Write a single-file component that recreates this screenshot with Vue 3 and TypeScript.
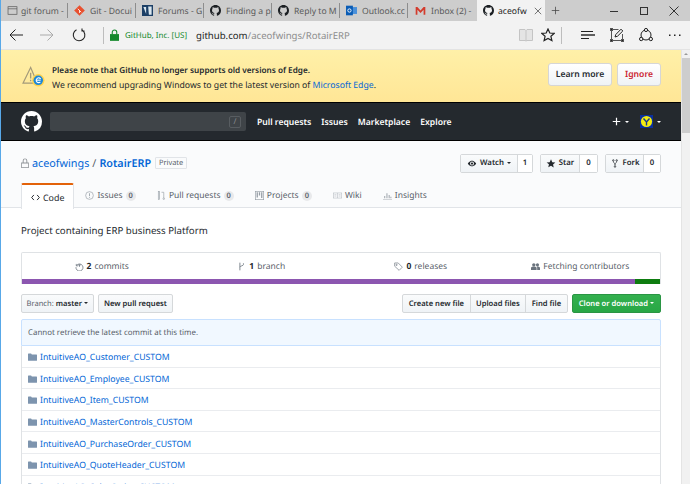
<script setup lang="ts">
interface Tab {
  title: string
  icon: string
  width: number
}

const tabs: Tab[] = [
  { title: 'git forum -', icon: 'page', width: 67 },
  { title: 'Git - Docui', icon: 'git', width: 68 },
  { title: 'Forums - G', icon: 'forums', width: 68 },
  { title: 'Finding a p', icon: 'github', width: 68 },
  { title: 'Reply to M', icon: 'github', width: 68 },
  { title: 'Outlook.cc', icon: 'outlook', width: 68 },
  { title: 'Inbox (2) -', icon: 'gmail', width: 69 },
]

const repoTabs = [
  { label: 'Issues', count: 0, icon: 'issue' },
  { label: 'Pull requests', count: 0, icon: 'pr' },
  { label: 'Projects', count: 0, icon: 'project' },
  { label: 'Wiki', icon: 'wiki' },
  { label: 'Insights', icon: 'graph' },
]

const folders = [
  'IntuitiveAO_Customer_CUSTOM',
  'IntuitiveAO_Employee_CUSTOM',
  'IntuitiveAO_Item_CUSTOM',
  'IntuitiveAO_MasterControls_CUSTOM',
  'IntuitiveAO_PurchaseOrder_CUSTOM',
  'IntuitiveAO_QuoteHeader_CUSTOM',
  'IntuitiveAO_SalesOrder_CUSTOM',
]

const octocat =
  'M8 0C3.58 0 0 3.58 0 8c0 3.54 2.29 6.53 5.47 7.59.4.07.55-.17.55-.38 0-.19-.01-.82-.01-1.49-2.01.37-2.53-.49-2.69-.94-.09-.23-.48-.94-.82-1.13-.28-.15-.68-.52-.01-.53.63-.01 1.08.58 1.23.82.72 1.21 1.87.87 2.33.66.07-.52.28-.87.51-1.07-1.78-.2-3.64-.89-3.64-3.95 0-.87.31-1.59.82-2.15-.08-.2-.36-1.02.08-2.12 0 0 .67-.21 2.2.82.64-.18 1.32-.27 2-.27s1.36.09 2 .27c1.53-1.04 2.2-.82 2.2-.82.44 1.1.16 1.92.08 2.12.51.56.82 1.27.82 2.15 0 3.07-1.87 3.75-3.65 3.95.29.25.54.73.54 1.48 0 1.07-.01 1.93-.01 2.2 0 .21.15.46.55.38A8.01 8.01 0 0 0 16 8c0-4.42-3.58-8-8-8z'
</script>

<template>
  <div class="window">
    <div class="tabstrip">
      <div v-for="tab in tabs" :key="tab.title" class="tab" :style="{ width: tab.width + 'px' }">
        <svg v-if="tab.icon === 'page'" class="tab-icon" viewBox="0 0 16 16" fill="none" stroke="#555">
          <rect x="1.5" y="2.5" width="13" height="11" />
          <line x1="1.5" y1="5.5" x2="14.5" y2="5.5" />
        </svg>
        <svg v-else-if="tab.icon === 'git'" class="tab-icon" viewBox="0 0 16 16">
          <rect x="2.500" y="2.500" width="11" height="11" transform="rotate(45 8 8)" fill="#e8502f" />
          <path d="M5.500 5.500l5 5M8 8v3.500" stroke="#fff" stroke-width="1.200" />
        </svg>
        <svg v-else-if="tab.icon === 'forums'" class="tab-icon" viewBox="0 0 16 16">
          <rect x="0" y="0" width="16" height="16" fill="#1c3f66" />
          <path d="M2 3l4 10V3zM9 2h5v12h-4z" fill="#d9e6ee" />
        </svg>
        <svg v-else-if="tab.icon === 'github'" class="tab-icon" viewBox="0 0 16 16" fill="#1b1f23">
          <path :d="octocat" />
        </svg>
        <svg v-else-if="tab.icon === 'outlook'" class="tab-icon" viewBox="0 0 16 16">
          <rect x="6" y="3" width="10" height="10" fill="#4a90d9" />
          <rect x="0" y="1" width="10" height="14" fill="#0a5cb5" />
          <circle cx="5" cy="8" r="2.400" fill="none" stroke="#fff" stroke-width="1.300" />
        </svg>
        <svg v-else class="tab-icon" viewBox="0 0 16 16">
          <path d="M1 3h2.500L8 8l4.500-5H15v11h-2.500V7L8 11.500 3.500 7v7H1z" fill="#d33b2c" />
        </svg>
        <span class="tab-title">{{ tab.title }}</span>
      </div>
      <div class="tab tab-active">
        <svg class="tab-icon" viewBox="0 0 16 16" fill="#1b1f23"><path :d="octocat" /></svg>
        <span class="tab-title">aceofw</span>
        <svg class="tab-close" viewBox="0 0 10 10" stroke="#555"><path d="M1 1l8 8M9 1l-8 8" /></svg>
      </div>
      <svg class="tab-new" viewBox="0 0 12 12" stroke="#444"><path d="M6 1v10M1 6h10" /></svg>
      <div class="window-controls">
        <svg viewBox="0 0 12 12" stroke="#333"><path d="M2 6.500h8" /></svg>
        <svg viewBox="0 0 12 12" stroke="#333" fill="none"><rect x="2.500" y="2.500" width="7" height="7" /></svg>
        <svg viewBox="0 0 12 12" stroke="#333"><path d="M1.500 1.500l9 9M10.500 1.500l-9 9" /></svg>
      </div>
    </div>

    <div class="toolbar">
      <svg class="nav-icon" viewBox="0 0 14 14" fill="none" stroke="#222"><path d="M14 7H1M6.500 1.500L1 7l5.500 5.500" /></svg>
      <svg class="nav-icon nav-forward" viewBox="0 0 14 14" fill="none" stroke="#aaa"><path d="M0 7h13M7.500 1.500L13 7l-5.500 5.500" /></svg>
      <svg class="nav-icon nav-reload" viewBox="0 0 14 14" fill="none" stroke="#222"><path d="M4.500 1.800A5.800 5.800 0 1 0 10 2M10 .500V3h2.500" stroke-width="1.100" /></svg>
      <span class="toolbar-sep"></span>
      <svg class="secure-lock" viewBox="0 0 10 13"><path d="M2.500 6V3.500a2.500 2.500 0 0 1 5 0V6" fill="none" stroke="#14892c" stroke-width="1.200" /><rect y="5.500" width="10" height="7.500" fill="#14892c" /></svg>
      <span class="secure-name">GitHub, Inc. [US]</span>
      <span class="url"><span class="url-host">github.com</span>/aceofwings/RotairERP</span>
      <svg class="tool-icon tool-reader" viewBox="0 0 14 14" fill="#e4e4e4" stroke="#c4c4c4"><path d="M.5 1.500h5.500l1 1 1-1h5.500v11H8l-1 .5-1-.5H.5zM7 2.500v10.500" /></svg>
      <svg class="tool-icon tool-star" viewBox="0 0 14 14" fill="none" stroke="#222" stroke-width="1.200"><path d="M7 1l1.800 4 4.400.4-3.300 2.900 1 4.300L7 10.400l-3.900 2.200 1-4.300L.8 5.400 5.200 5z" /></svg>
      <span class="toolbar-sep sep-right"></span>
      <svg class="tool-icon tool-hub" viewBox="0 0 14 14" stroke="#222"><path d="M0 3.500h12" /><path d="M0 7h14" stroke-width="1.400" /><path d="M0 10.500h8" /></svg>
      <svg class="tool-icon tool-note" viewBox="0 0 14 14" fill="none" stroke="#555"><path d="M1.500 1.500h7M1.500 1.500v11h11V6" /><path d="M5 9l.8-2.500L11 1.200l1.800 1.800L7.500 8.200z" stroke="#222" /><rect x=".5" y=".5" width="2" height="2" fill="#222" /><rect x=".5" y="11.500" width="2" height="2" fill="#222" /><rect x="11.500" y="11.500" width="2" height="2" fill="#222" /></svg>
      <svg class="tool-icon tool-share" viewBox="0 0 14 14" fill="none" stroke="#222"><circle cx="7" cy="7" r="5" /><circle cx="7" cy="2" r="1.600" fill="#f2f2f2" /><circle cx="2.200" cy="11" r="1.700" fill="#f2f2f2" /><circle cx="11.800" cy="11" r="1.700" fill="#f2f2f2" /></svg>
      <svg class="tool-icon tool-more" viewBox="0 0 14 14" fill="#222"><rect x="1" y="6.500" width="1.500" height="1.500" /><rect x="6" y="6.500" width="1.500" height="1.500" /><rect x="11" y="6.500" width="1.500" height="1.500" /></svg>
    </div>

    <div class="viewport">
      <div class="page">
        <div class="notice">
          <svg class="notice-icon" viewBox="0 0 24 22">
            <path d="M9 1.500L1 18h15z" fill="none" stroke="#a49a7a" stroke-width="1.200" />
            <path d="M9 7v6M9 14.500v1.500" stroke="#a49a7a" stroke-width="1.400" />
            <circle cx="17" cy="15" r="6.500" fill="#ffd34d" />
            <circle cx="17" cy="15" r="5" fill="#1e88d8" />
            <rect x="14.500" y="14.300" width="5" height="1.100" fill="#fff" />
            <path d="M19.500 13.600a2.500 2.500 0 1 0-.3 3" fill="none" stroke="#fff" stroke-width="1.100" />
          </svg>
          <div class="notice-text">
            <p class="notice-title">Please note that GitHub no longer supports old versions of Edge.</p>
            <p class="notice-body">We recommend upgrading Windows to get the latest version of <a>Microsoft Edge</a>.</p>
          </div>
          <button class="notice-btn notice-learn">Learn more</button>
          <button class="notice-btn notice-ignore">Ignore</button>
        </div>

        <header class="site-header">
          <svg class="site-logo" viewBox="0 0 16 16" fill="#fff"><path :d="octocat" /></svg>
          <div class="site-search"><span class="search-key">/</span></div>
          <nav class="site-nav">
            <a>Pull requests</a>
            <a>Issues</a>
            <a>Marketplace</a>
            <a>Explore</a>
          </nav>
          <div class="header-right">
            <svg class="header-plus" viewBox="0 0 12 12" stroke="#fff" stroke-width="1.600"><path d="M6 1v10M1 6h10" /></svg>
            <span class="caret caret-light"></span>
            <svg class="avatar" viewBox="0 0 13 13">
              <rect width="13" height="13" fill="#0a2f9e" />
              <circle cx="6.500" cy="6.500" r="5.600" fill="#f4ec12" />
              <path d="M3.500 3.500l3 3.500 3-3.500M6.500 7v3.500" fill="none" stroke="#183a8c" stroke-width="1.400" />
            </svg>
            <span class="caret caret-light"></span>
          </div>
        </header>

        <div class="repo-head">
          <div class="repo-title-row">
            <svg class="repo-lock" viewBox="0 0 10 13" fill="#8f9397"><path fill-rule="evenodd" d="M2 6V3.500a3 3 0 0 1 6 0V6h2v7H0V6zm1.200 0h3.600V3.500a1.800 1.800 0 0 0-3.600 0zM1 7v5h8V7z" /></svg>
            <a class="repo-owner">aceofwings</a>
            <span class="repo-slash">/</span>
            <a class="repo-name">RotairERP</a>
            <span class="repo-private">Private</span>
            <div class="repo-actions">
              <div class="counter-btn">
                <span class="counter-label">
                  <svg viewBox="0 0 16 16" fill="#24292e"><path fill-rule="evenodd" d="M8 3C3.500 3 .5 8 .5 8s3 5 7.500 5 7.500-5 7.500-5-3-5-7.500-5zm0 8.500a3.500 3.500 0 1 1 0-7 3.500 3.500 0 0 1 0 7zM8 6a2 2 0 1 0 0 4 2 2 0 0 0 0-4z" /></svg>
                  Watch <span class="caret"></span>
                </span>
                <span class="counter-num">1</span>
              </div>
              <div class="counter-btn">
                <span class="counter-label">
                  <svg viewBox="0 0 14 14" fill="#24292e"><path d="M7 .5l2 4.400 4.800.5-3.600 3.200 1 4.700L7 10.400l-4.200 2.400 1-4.700L.2 5.400 5 4.900z" /></svg>
                  Star
                </span>
                <span class="counter-num">0</span>
              </div>
              <div class="counter-btn">
                <span class="counter-label">
                  <svg viewBox="0 0 10 16" fill="none" stroke="#24292e" stroke-width="1.300"><circle cx="2" cy="2.500" r="1.300" /><circle cx="8" cy="2.500" r="1.300" /><circle cx="5" cy="13.500" r="1.300" /><path d="M2 4c0 3 3 3 3 6v2M8 4c0 3-3 3-3 6" /></svg>
                  Fork
                </span>
                <span class="counter-num">0</span>
              </div>
            </div>
          </div>
          <nav class="repo-tabs">
            <a class="repo-tab repo-tab-active">
              <svg viewBox="0 0 14 10" fill="none" stroke="#24292e" stroke-width="1.500"><path d="M4.500 1L1 5l3.500 4M9.500 1L13 5l-3.500 4" /></svg>
              Code
            </a>
            <a v-for="t in repoTabs" :key="t.label" class="repo-tab">
              <svg v-if="t.icon === 'issue'" viewBox="0 0 14 14" fill="none" stroke="#959da5"><circle cx="7" cy="7" r="6" /><path d="M7 3.500v4.500M7 9.500v1.200" stroke-width="1.300" /></svg>
              <svg v-else-if="t.icon === 'pr'" viewBox="0 0 12 14" fill="none" stroke="#959da5"><rect x="1" y="1" width="2" height="12" /><path d="M9.500 11V2H6" /><circle cx="9.500" cy="12" r="1.200" /></svg>
              <svg v-else-if="t.icon === 'project'" viewBox="0 0 14 14" fill="none" stroke="#959da5"><rect x=".5" y=".5" width="13" height="13" /><path d="M3.500 2v8M7 2v5M10.500 2v9" stroke-width="2" /></svg>
              <svg v-else-if="t.icon === 'wiki'" viewBox="0 0 16 14" fill="none" stroke="#b4bac0"><rect x=".5" y="2.500" width="15" height="9" /><path d="M8 2.500v9M2.500 5.500h3.500M2.500 8h3.500M10 5.500h3.500M10 8h3.500" /></svg>
              <svg v-else viewBox="0 0 16 14" fill="#a8aeb4"><path d="M0 13h16v1H0zM2 8h2v4H2zM6 3h2v9H6zM10 6h2v6h-2zM13 9h2v3h-2z" /></svg>
              {{ t.label }}
              <span v-if="t.count !== undefined" class="tab-count">{{ t.count }}</span>
            </a>
          </nav>
        </div>

        <main class="container">
          <p class="repo-desc">Project containing ERP business Platform</p>

          <div class="summary">
            <div class="summary-stats">
              <span class="stat">
                <svg viewBox="0 0 14 14" fill="none" stroke="#6a737d" stroke-width="1.200"><path d="M2 3v3h3" /><path d="M2.400 5.500A5.500 5.500 0 1 1 1.500 8" /><path d="M7 4v3.500M5 4.500h4" /></svg>
                <b>2</b> commits
              </span>
              <span class="stat">
                <svg viewBox="0 0 10 14" fill="none" stroke="#6a737d" stroke-width="1.300"><path d="M2.500 1v12" /><path d="M8 2v2c0 2-5.500 2-5.500 4" /></svg>
                <b>1</b> branch
              </span>
              <span class="stat">
                <svg viewBox="0 0 14 14" fill="none" stroke="#6a737d"><path d="M1 1.500h5.500l6.500 6.500-5 5-7-6.500z" /><circle cx="4" cy="4.500" r="1" /></svg>
                <b>0</b> releases
              </span>
              <span class="stat">
                <svg viewBox="0 0 16 12" fill="#6a737d"><circle cx="5" cy="3" r="3" /><circle cx="11.500" cy="3" r="2.800" /><path d="M0 12V8.500C0 7 2 6 5 6s5 1 5 2.500V12zM11 12V8.500c0-.9-.4-1.800-1.200-2.400 3.200-.4 6.200.6 6.200 2.400V12z" /></svg>
                Fetching contributors
              </span>
            </div>
            <div class="lang-bar">
              <span class="lang-main"></span>
              <span class="lang-other"></span>
            </div>
          </div>

          <div class="file-nav">
            <button class="btn btn-branch"><span class="branch-label">Branch:</span> master <span class="caret"></span></button>
            <button class="btn btn-pr">New pull request</button>
            <div class="btn-group">
              <button class="btn">Create new file</button>
              <button class="btn">Upload files</button>
              <button class="btn">Find file</button>
            </div>
            <button class="btn btn-clone">Clone or download <span class="caret caret-light"></span></button>
          </div>

          <div class="commit-tease">Cannot retrieve the latest commit at this time.</div>
          <div class="files">
            <div v-for="name in folders" :key="name" class="file-row">
              <svg class="folder" viewBox="0 0 14 12" fill="#7d94ae"><path d="M0 1.500C0 1 .3 .7 .8 .7h4L6 2h7.200c.5 0 .8.300.8.800V11c0 .5-.3.800-.8.800H.8C.3 11.800 0 11.500 0 11z" /></svg>
              <a>{{ name }}</a>
            </div>
          </div>
        </main>
      </div>
      <div class="scrollbar">
        <span class="scroll-up"></span>
        <span class="scroll-thumb"></span>
      </div>
    </div>
  </div>
</template>

<style>
html,
body {
  margin: 0;
  overflow: hidden;
}
</style>

<style scoped>
.window {
  width: 690px;
  height: 484px;
  box-sizing: border-box;
  border-left: 1px solid #58a8e8;
  display: flex;
  flex-direction: column;
  overflow: hidden;
  font-family: "Noto Sans", "Open Sans", sans-serif;
  text-rendering: geometricPrecision;
  background: #fff;
}

p {
  margin: 0;
}

button {
  font-family: inherit;
  text-rendering: geometricPrecision;
}

.tabstrip {
  height: 21px;
  flex: none;
  display: flex;
  background: #cdcdcd;
}

.tab {
  box-sizing: border-box;
  height: 21px;
  padding: 0 3px 0 6px;
  display: flex;
  align-items: center;
  gap: 5px;
  background: linear-gradient(#8d8d8d, #8d8d8d) right center / 1px 15px no-repeat;
  font-size: 8.6px;
  color: #5a5a5a;
  white-space: nowrap;
}

.tab:first-child {
  gap: 3px;
}

.tab:nth-child(7) {
  background: none;
  padding-left: 7px;
  padding-right: 7px;
}

.tab-icon {
  width: 11px;
  height: 11px;
  flex: none;
}

.tab-title {
  flex: 1;
  min-width: 0;
}

.tab-active {
  width: 68px;
  background: #f2f2f2;
  color: #222;
  gap: 4px;
}

.tab-close {
  width: 8px;
  height: 8px;
  flex: none;
  margin-left: 2px;
}

.tab-new {
  width: 9px;
  height: 9px;
  margin: 6px 0 0 6px;
}

.window-controls {
  margin-left: auto;
  display: flex;
  gap: 18px;
  padding: 5px 10px 0 0;
}

.window-controls svg {
  width: 12px;
  height: 12px;
}

.toolbar {
  height: 29px;
  flex: none;
  box-sizing: border-box;
  display: flex;
  align-items: center;
  background: #f2f2f2;
  border-bottom: 1px solid #e3e3e3;
  padding: 0 8px;
}

.nav-icon {
  width: 14px;
  height: 14px;
  flex: none;
}

.nav-forward {
  margin-left: 17px;
}

.nav-reload {
  margin-left: 18px;
}

.toolbar-sep {
  width: 1px;
  height: 17px;
  margin-left: 17px;
  background: #bdbdbd;
  flex: none;
}

.secure-lock {
  width: 9px;
  height: 12px;
  margin-left: 6px;
  flex: none;
}

.secure-name {
  margin-left: 6px;
  font-size: 8px;
  color: #14892c;
}

.url {
  margin-left: 9px;
  font-size: 9.6px;
  color: #8c8c8c;
}

.url-host {
  color: #222;
}

.tool-icon {
  width: 14px;
  height: 14px;
  flex: none;
}

.tool-reader {
  margin-left: auto;
}

.tool-star {
  margin-left: 8px;
}

.sep-right {
  margin-left: 6px;
}

.tool-hub {
  margin-left: 19px;
}

.tool-note {
  margin-left: 15px;
}

.tool-share {
  margin-left: 15px;
}

.tool-more {
  margin-left: 15px;
}

.viewport {
  flex: 1;
  min-height: 0;
  display: flex;
}

.page {
  flex: 1;
  min-width: 0;
  background: #fff;
}

.scrollbar {
  width: 8px;
  flex: none;
  background: #f1f1f1;
  border-left: 1px solid #e4e4e4;
  display: flex;
  flex-direction: column;
}

.scroll-up {
  height: 8px;
  position: relative;
}

.scroll-up::before {
  content: "";
  position: absolute;
  left: 1.500px;
  top: 3px;
  border: 2.500px solid transparent;
  border-top: 0;
  border-bottom-color: #9a9a9a;
}

.scroll-thumb {
  height: 75px;
  background: #cdcdcd;
}

.notice {
  height: 52px;
  box-sizing: border-box;
  display: flex;
  align-items: center;
  padding: 0 20px 0 21px;
  background: linear-gradient(#fff0a8, #ffe696);
}

.notice-icon {
  width: 23px;
  height: 21px;
  flex: none;
}

.notice-text {
  margin: 3px 0 0 7px;
  font-size: 8.7px;
  color: #24292e;
  line-height: 15px;
  flex: 1;
  white-space: nowrap;
}

.notice-title {
  font-weight: 600;
  font-size: 8.2px;
}

.notice-body a {
  color: #0366d6;
}

.notice-btn {
  height: 23px;
  box-sizing: border-box;
  padding: 0;
  font-size: 8.6px;
  font-weight: 600;
  color: #24292e;
  background: linear-gradient(#fff, #eff3f6);
  border: 1px solid #d6d6d6;
  border-radius: 3px;
  margin-top: -4px;
}

.notice-learn {
  width: 64px;
}

.notice-ignore {
  width: 44px;
  margin-left: 5px;
  color: #cb2431;
}

.site-header {
  height: 39px;
  box-sizing: border-box;
  display: flex;
  align-items: center;
  padding: 0 20px;
  background: #24292e;
  border-top: 1px solid #000;
  border-bottom: 1px solid #000;
}

.site-logo {
  width: 21px;
  height: 21px;
  flex: none;
}

.site-search {
  width: 196px;
  height: 19px;
  margin-left: 8px;
  flex: none;
  box-sizing: border-box;
  background: #3f4448;
  border-radius: 2px;
  display: flex;
  align-items: center;
  justify-content: flex-end;
  padding-right: 5px;
}

.search-key {
  width: 12px;
  height: 12px;
  box-sizing: border-box;
  border: 1px solid #585d61;
  border-radius: 2px;
  color: #8a8e92;
  font-size: 8px;
  line-height: 10px;
  text-align: center;
}

.site-nav {
  display: flex;
  gap: 10px;
  margin-left: 11px;
  font-size: 8.6px;
  font-weight: 600;
  color: #fff;
}

.header-right {
  margin-left: auto;
  display: flex;
  align-items: center;
}

.header-plus {
  width: 9px;
  height: 9px;
}

.caret {
  display: inline-block;
  width: 0;
  height: 0;
  border: 2.500px solid transparent;
  border-top-color: #24292e;
  border-bottom: 0;
  vertical-align: middle;
}

.caret-light {
  border-top-color: #fff;
}

.header-right .caret {
  margin-left: 4px;
}

.avatar {
  width: 13px;
  height: 13px;
  margin-left: 11px;
}

.repo-head {
  height: 67px;
  box-sizing: border-box;
  background: #fafbfc;
  border-bottom: 1px solid #e1e4e8;
  padding: 11px 0 0 20px;
}

.repo-title-row {
  height: 22px;
  display: flex;
  align-items: center;
  padding-right: 20px;
}

.repo-lock {
  width: 8px;
  height: 10px;
  margin-right: 3px;
  flex: none;
}

.repo-owner,
.repo-name {
  font-size: 10.8px;
  color: #0366d6;
}

.repo-name {
  font-weight: 600;
}

.repo-slash {
  margin: 0 3px;
  font-size: 10.8px;
  color: #586069;
}

.repo-private {
  margin-left: 4px;
  padding: 0 3px;
  border: 1px solid #e1e4e8;
  font-size: 7.4px;
  line-height: 10.500px;
  color: #586069;
  border-radius: 1px;
}

.repo-actions {
  margin-left: auto;
  display: flex;
  gap: 7px;
}

.counter-btn {
  display: flex;
  height: 19px;
  box-sizing: border-box;
  border: 1px solid #d5d8da;
  border-radius: 2px;
  font-size: 7.8px;
  font-weight: 600;
  color: #24292e;
}

.counter-label {
  display: flex;
  align-items: center;
  justify-content: center;
  gap: 3px;
  box-sizing: border-box;
  background: linear-gradient(#fafbfc, #eff3f6);
  border-right: 1px solid #d5d8da;
}

.counter-btn:nth-child(1) .counter-label {
  width: 57px;
}

.counter-btn:nth-child(2) .counter-label {
  width: 39px;
}

.counter-btn:nth-child(3) .counter-label {
  width: 38px;
}

.counter-label svg {
  height: 9px;
  width: 10px;
}

.counter-num {
  display: flex;
  align-items: center;
  justify-content: center;
  background: #fff;
  width: 14px;
}

.counter-btn:nth-child(2) .counter-num {
  width: 17px;
}

.counter-btn:nth-child(3) .counter-num {
  width: 16px;
}

.repo-tabs {
  display: flex;
  margin-top: 9px;
}

.repo-tab {
  height: 25px;
  box-sizing: border-box;
  display: flex;
  align-items: center;
  gap: 3px;
  padding: 0 10px 0 11px;
  font-size: 8.5px;
  color: #586069;
}

.repo-tab svg {
  width: 9px;
  height: 9px;
  flex: none;
}

.repo-tab-active {
  color: #24292e;
  background: #fff;
  border: 1px solid #e1e4e8;
  border-top: 2px solid #e36209;
  border-bottom: 0;
  border-radius: 2px 2px 0 0;
  padding: 0 9px;
  height: 26px;
  font-size: 8.9px;
}

.tab-count {
  padding: 0 3px;
  font-size: 7.5px;
  line-height: 10px;
  font-weight: 600;
  color: #586069;
  background: rgba(27, 31, 35, 0.08);
  border-radius: 6px;
}

.container {
  padding: 15px 20px 0;
}

.repo-desc {
  font-size: 9.7px;
  line-height: 16px;
  color: #24292e;
}

.summary {
  margin-top: 13px;
  border: 1px solid #dfe2e5;
  border-bottom: 0;
  border-radius: 2px 2px 0 0;
}

.summary-stats {
  height: 26px;
  display: grid;
  grid-template-columns: repeat(4, 1fr);
  font-size: 8.5px;
  color: #586069;
}

.stat {
  display: flex;
  align-items: center;
  justify-content: center;
  gap: 3px;
}

.stat svg {
  width: 9px;
  height: 9px;
  flex: none;
}

.stat b {
  color: #24292e;
}

.lang-bar {
  height: 5px;
  display: flex;
}

.lang-main {
  flex: 1;
  background: #8c56b0;
}

.lang-other {
  width: 25px;
  background: #0e7c10;
}

.file-nav {
  display: flex;
  margin-top: 10px;
  height: 19px;
}

.btn {
  height: 19px;
  box-sizing: border-box;
  padding: 0 5.500px;
  font-size: 7.6px;
  font-weight: 600;
  color: #24292e;
  background: linear-gradient(#fafbfc, #eff3f6);
  border: 1px solid #d5d8da;
  border-radius: 2px;
  white-space: nowrap;
}

.btn-branch {
  padding: 0 4.500px;
}

.branch-label {
  font-weight: 400;
  color: #586069;
}

.btn-pr {
  margin-left: 4px;
}

.btn-group {
  margin-left: auto;
  display: flex;
}

.btn-group .btn {
  border-radius: 0;
  margin-left: -1px;
}

.btn-group .btn:first-child {
  border-radius: 2px 0 0 2px;
}

.btn-group .btn:last-child {
  border-radius: 0 2px 2px 0;
}

.btn-clone {
  margin-left: 4px;
  padding: 0 6px;
  color: #fff;
  background: linear-gradient(#34b04f, #28a745);
  border-color: #2a9544;
}

.commit-tease {
  margin-top: 6px;
  height: 27px;
  box-sizing: border-box;
  padding-left: 6px;
  display: flex;
  align-items: center;
  font-size: 7.9px;
  color: #586069;
  background: #f1f8ff;
  border: 1px solid #c8e1ff;
  border-radius: 2px 2px 0 0;
}

.files {
  border-left: 1px solid #dfe2e5;
  border-right: 1px solid #dfe2e5;
}

.file-row {
  height: 21.600px;
  box-sizing: border-box;
  display: flex;
  align-items: center;
  padding: 2px 0 0 6px;
  border-bottom: 1px solid #eaecef;
  font-size: 8.7px;
  color: #0366d6;
}

.folder {
  width: 9px;
  height: 8px;
  margin-right: 3px;
  flex: none;
}
</style>
